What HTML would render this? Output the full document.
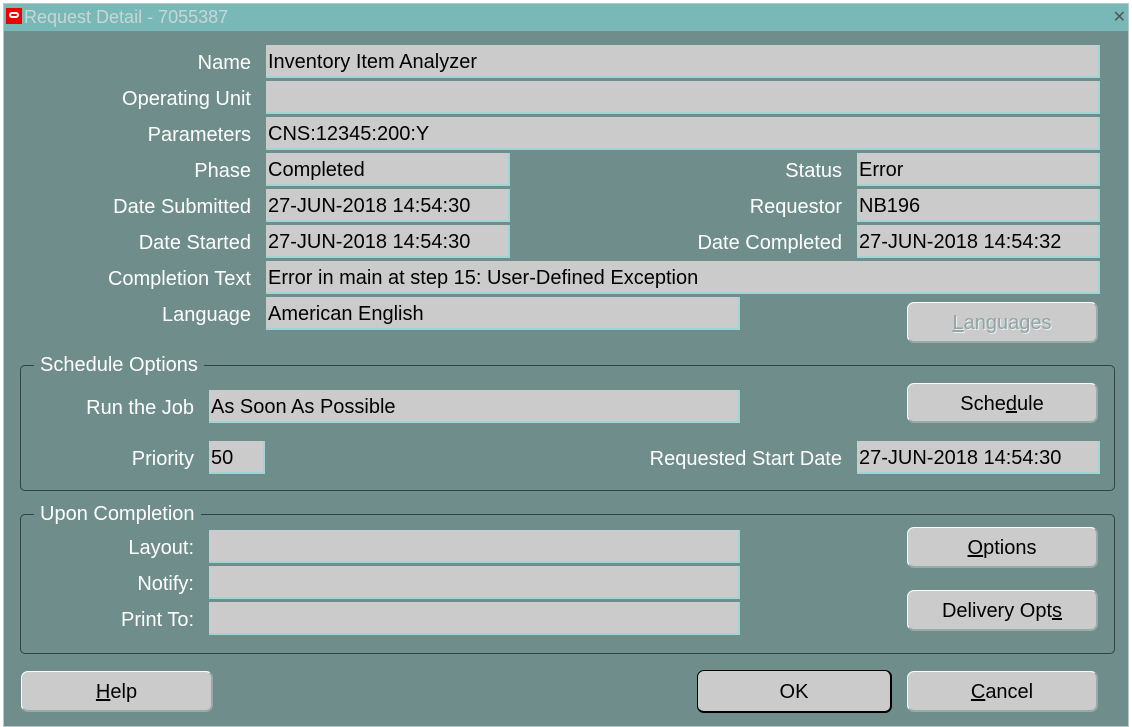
<!DOCTYPE html>
<html><head><style>
*{margin:0;padding:0;box-sizing:border-box}
body{width:1132px;height:727px;overflow:hidden;background:#fff;font-family:"Liberation Sans",Arial,sans-serif;font-size:20px;position:relative}
#win{position:absolute;left:3px;top:3px;width:1126px;height:724px;background:#6f8d8b;border:1px solid #b8c8c8}
#title{position:absolute;left:4px;top:4px;width:1124px;height:27px;background:#78b9b8;color:#c8d6d6;font-size:18px;line-height:27px;padding-left:20px}
.logo{position:absolute;left:6px;top:8px;width:16px;height:16px;background:#e00}
.logo:after{content:"";position:absolute;left:3px;top:4px;width:10px;height:6px;border:2px solid #fff;border-radius:4px;box-sizing:border-box}
.x{position:absolute;right:6px;top:7px;color:#555;font-size:16px}
.l{position:absolute;color:#fff;text-align:right;line-height:36px;white-space:nowrap}
.f{position:absolute;height:33px;background:#cbcbcb;border-right:2px solid #9fd6d5;border-bottom:2px solid #9fd6d5;line-height:35px;padding-left:2px;color:#000;white-space:nowrap}
.b{position:absolute;background:#cbcbcb;border:1px solid #fff;border-right:2px solid #9aa;border-bottom:2px solid #9aa;border-radius:7px;text-align:center;color:#000}
.g{position:absolute;border:1px solid #2f4443;border-radius:5px}
.gl{position:absolute;color:#fff;background:#6f8d8b;padding:0 6px;line-height:20px}
</style></head><body>
<div id="win"></div>
<div id="title">Request Detail - 7055387</div>
<div class="logo"></div><div class="x">✕</div>

<div class="l" style="right:881px;top:45px">Name</div><div class="f" style="left:266px;top:45px;width:834px">Inventory Item Analyzer</div>
<div class="l" style="right:881px;top:81px">Operating Unit</div><div class="f" style="left:266px;top:81px;width:834px"></div>
<div class="l" style="right:881px;top:117px">Parameters</div><div class="f" style="left:266px;top:117px;width:834px">CNS:12345:200:Y</div>
<div class="l" style="right:881px;top:153px">Phase</div><div class="f" style="left:266px;top:153px;width:244px">Completed</div>
<div class="l" style="right:290px;top:153px">Status</div><div class="f" style="left:857px;top:153px;width:243px">Error</div>
<div class="l" style="right:881px;top:189px">Date Submitted</div><div class="f" style="left:266px;top:189px;width:244px">27-JUN-2018 14:54:30</div>
<div class="l" style="right:290px;top:189px">Requestor</div><div class="f" style="left:857px;top:189px;width:243px">NB196</div>
<div class="l" style="right:881px;top:225px">Date Started</div><div class="f" style="left:266px;top:225px;width:244px">27-JUN-2018 14:54:30</div>
<div class="l" style="right:290px;top:225px">Date Completed</div><div class="f" style="left:857px;top:225px;width:243px">27-JUN-2018 14:54:32</div>
<div class="l" style="right:881px;top:261px">Completion Text</div><div class="f" style="left:266px;top:261px;width:834px">Error in main at step 15: User-Defined Exception</div>
<div class="l" style="right:881px;top:297px">Language</div><div class="f" style="left:266px;top:297px;width:474px">American English</div>
<div class="b" style="left:907px;top:302px;width:191px;height:41px;line-height:41px;color:#8fa6a5;text-shadow:1px 1px 0 #eee"><u>L</u>anguages</div>

<div class="g" style="left:20px;top:365px;width:1095px;height:126px"></div>
<div class="gl" style="left:34px;top:355px">Schedule Options</div>
<div class="l" style="right:938px;top:390px">Run the Job</div><div class="f" style="left:209px;top:390px;width:531px">As Soon As Possible</div>
<div class="b" style="left:907px;top:383px;width:191px;height:40px;line-height:40px">Sche<u>d</u>ule</div>
<div class="l" style="right:938px;top:441px">Priority</div><div class="f" style="left:209px;top:441px;width:56px">50</div>
<div class="l" style="right:290px;top:441px">Requested Start Date</div><div class="f" style="left:857px;top:441px;width:243px">27-JUN-2018 14:54:30</div>

<div class="g" style="left:20px;top:514px;width:1095px;height:140px"></div>
<div class="gl" style="left:34px;top:504px">Upon Completion</div>
<div class="l" style="right:938px;top:530px">Layout:</div><div class="f" style="left:209px;top:530px;width:531px"></div>
<div class="l" style="right:938px;top:566px">Notify:</div><div class="f" style="left:209px;top:566px;width:531px"></div>
<div class="l" style="right:938px;top:602px">Print To:</div><div class="f" style="left:209px;top:602px;width:531px"></div>
<div class="b" style="left:907px;top:527px;width:191px;height:41px;line-height:41px"><u>O</u>ptions</div>
<div class="b" style="left:907px;top:590px;width:191px;height:41px;line-height:41px">Delivery Opt<u>s</u></div>

<div class="b" style="left:21px;top:671px;width:192px;height:41px;line-height:41px"><u>H</u>elp</div>
<div class="b" style="left:697px;top:670px;width:195px;height:43px;line-height:42px;border:1px solid #000;border-right:2px solid #000;border-bottom:2px solid #000">OK</div>
<div class="b" style="left:907px;top:671px;width:191px;height:41px;line-height:41px"><u>C</u>ancel</div>
</body></html>
